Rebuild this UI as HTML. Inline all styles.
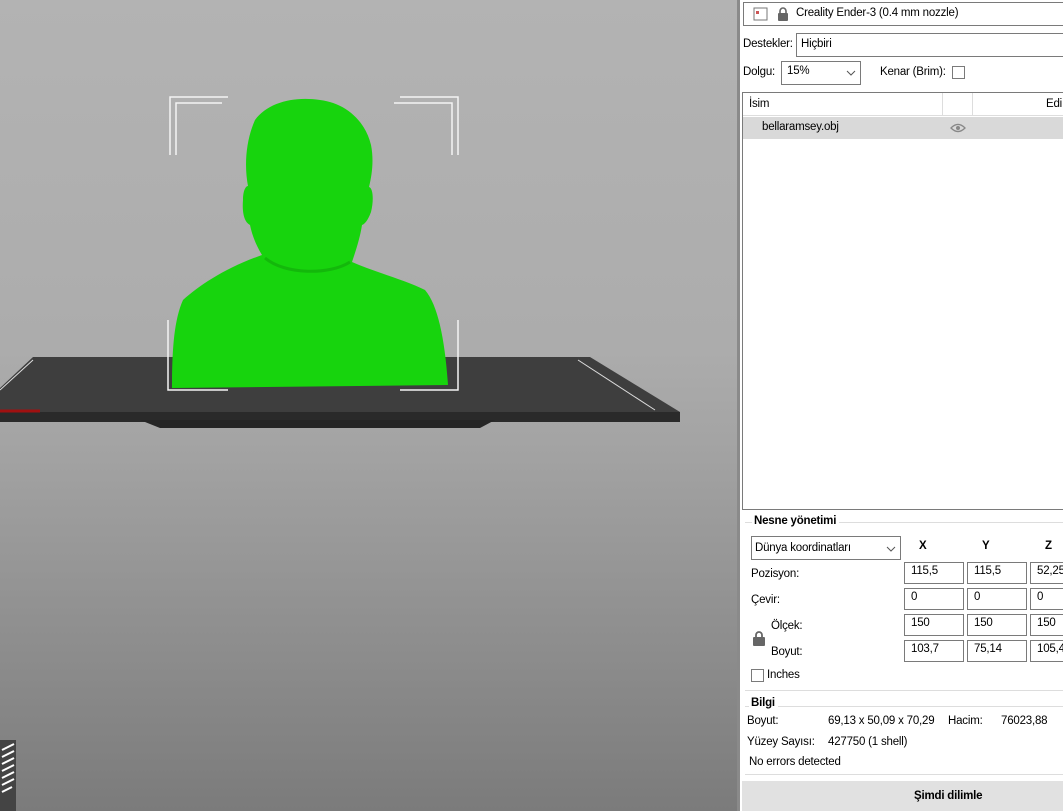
<!DOCTYPE html>
<html><head><meta charset="utf-8">
<style>
*{box-sizing:border-box;margin:0;padding:0}
body{width:1063px;height:811px;overflow:hidden;position:relative;font-family:"Liberation Sans",sans-serif;font-size:11.5px;letter-spacing:-0.2px;color:#000;background:#fff}
.vp{position:absolute;left:0;top:0;width:737px;height:811px;background:linear-gradient(#b3b3b3 0px,#acacac 350px,#a4a4a4 440px,#7b7b7b 811px)}
.sep{position:absolute;left:737px;top:0;width:3px;height:811px;background:#8a8a8a}
.a{position:absolute;white-space:nowrap}
.box{position:absolute;border:1px solid #7a7a7a;background:#fff}
.in{position:absolute;border:1px solid #7a7a7a;background:#fff;width:60px;height:22px;padding:2px 0 0 6px}
.b{font-weight:bold}
</style></head><body>
<div class="vp"></div>
<svg class="a" style="left:0;top:0" width="737" height="811">
 <polygon points="33,357 590,357 680,412 0,412 0,388" fill="#3e3e3e"/>
 <polygon points="0,412 680,412 680,422 0,422" fill="#2a2a2a"/>
 <polygon points="140,420 495,420 480,428 160,428" fill="#252525"/>
 <line x1="33" y1="360" x2="0" y2="390" stroke="#ddd" stroke-width="1"/>
 <line x1="578" y1="360" x2="655" y2="410" stroke="#ddd" stroke-width="1"/>
 <line x1="0" y1="411" x2="40" y2="411" stroke="#a01010" stroke-width="3"/>
 <path d="M262,255 C256,245 252,235 250,225 C244,222 242,212 243,200 C243,190 246,186 248,186 C244,165 246,140 255,120 C268,102 295,96 320,100 C345,103 365,120 371,145 C374,160 372,175 369,187 C373,188 374,200 371,212 C368,220 365,224 362,225 C360,238 356,250 352,262 C375,272 405,280 425,290 C438,305 445,340 448,385 L172,388 C172,350 174,320 183,300 C200,285 225,268 262,255 Z" fill="#17d40d"/>
 <path d="M265,258 C285,275 330,275 350,262" stroke="#13b80b" stroke-width="3" fill="none"/>
 <path d="M170,155 V97 H228 M176,155 V103 H222 M400,97 H458 V155 M394,103 H452 V155 M168,320 V390 H228 M458,320 V390 H400" stroke="#f4f4f4" stroke-width="1.5" fill="none"/>
 <rect x="0" y="740" width="16" height="71" fill="#444"/>
 <path d="M2,750 l12,-6 M2,757 l12,-6 M2,764 l12,-6 M2,771 l12,-6 M2,778 l12,-6 M2,785 l12,-6 M2,792 l10,-5" stroke="#fff" stroke-width="2"/>
</svg>
<div class="sep"></div>
<div class="a" style="left:740px;top:0;width:323px;height:811px;background:#fff"></div>
<div class="box" style="left:743px;top:2px;width:330px;height:24px"></div>
<svg class="a" style="left:753px;top:7px" width="40" height="16"><rect x="1" y="1" width="13" height="12" fill="#fff" stroke="#777"/><rect x="3" y="4" width="3" height="3" fill="#c55"/><rect x="25" y="6" width="10" height="8" rx="1" fill="#666"/><path d="M27,6 v-2 a3,3 0 0 1 6,0 v2" stroke="#666" stroke-width="1.6" fill="none"/></svg>
<div class="a" style="left:796px;top:7px">Creality Ender-3 (0.4 mm nozzle)</div>
<div class="a" style="left:743px;top:38px">Destekler:</div>
<div class="box" style="left:796px;top:33px;width:280px;height:24px"></div>
<div class="a" style="left:801px;top:38px">Hiçbiri</div>
<div class="a" style="left:743px;top:66px">Dolgu:</div>
<div class="box" style="left:781px;top:61px;width:80px;height:24px"></div>
<div class="a" style="left:787px;top:65px">15%</div>
<svg class="a" style="left:846px;top:69px" width="10" height="8"><path d="M1,2 L5,6 L9,2" stroke="#555" fill="none"/></svg>
<div class="a" style="left:880px;top:66px">Kenar (Brim):</div>
<div class="box" style="left:952px;top:66px;width:13px;height:13px"></div>
<div class="box" style="left:742px;top:92px;width:330px;height:418px"></div>
<div class="a" style="left:743px;top:93px;width:330px;height:23px;border-bottom:1px solid #ddd"></div>
<div class="a" style="left:942px;top:93px;width:1px;height:23px;background:#ddd"></div>
<div class="a" style="left:972px;top:93px;width:1px;height:23px;background:#ddd"></div>
<div class="a" style="left:749px;top:98px">İsim</div>
<div class="a" style="left:1046px;top:98px">Edi</div>
<div class="a" style="left:743px;top:117px;width:330px;height:22px;background:#d9d9d9"></div>
<div class="a" style="left:762px;top:121px">bellaramsey.obj</div>
<svg class="a" style="left:950px;top:122px" width="16" height="12"><path d="M1,6 Q8,-1 15,6 Q8,13 1,6 Z" fill="none" stroke="#888" stroke-width="1.3"/><circle cx="8" cy="6" r="2" fill="#888"/></svg>
<div class="a" style="left:745px;top:522px;width:330px;height:1px;background:#ddd"></div>
<div class="a b" style="left:752px;top:515px;background:#fff;padding:0 3px 0 2px">Nesne yönetimi</div>
<div class="box" style="left:751px;top:536px;width:150px;height:24px"></div>
<div class="a" style="left:755px;top:542px">Dünya koordinatları</div>
<svg class="a" style="left:886px;top:545px" width="10" height="8"><path d="M1,2 L5,6 L9,2" stroke="#555" fill="none"/></svg>
<div class="a b" style="left:919px;top:540px">X</div>
<div class="a b" style="left:982px;top:540px">Y</div>
<div class="a b" style="left:1045px;top:540px">Z</div>
<div class="a" style="left:751px;top:568px">Pozisyon:</div>
<div class="a" style="left:751px;top:594px">Çevir:</div>
<div class="a" style="left:771px;top:620px">Ölçek:</div>
<div class="a" style="left:771px;top:646px">Boyut:</div>
<svg class="a" style="left:752px;top:631px" width="14" height="16"><rect x="1" y="6" width="12" height="9" rx="1" fill="#666"/><path d="M4,6 v-2 a3,3 0 0 1 6,0 v2" stroke="#666" stroke-width="1.8" fill="none"/></svg>
<div class="in" style="left:904px;top:562px">115,5</div><div class="in" style="left:967px;top:562px">115,5</div><div class="in" style="left:1030px;top:562px">52,25</div>
<div class="in" style="left:904px;top:588px">0</div><div class="in" style="left:967px;top:588px">0</div><div class="in" style="left:1030px;top:588px">0</div>
<div class="in" style="left:904px;top:614px">150</div><div class="in" style="left:967px;top:614px">150</div><div class="in" style="left:1030px;top:614px">150</div>
<div class="in" style="left:904px;top:640px">103,7</div><div class="in" style="left:967px;top:640px">75,14</div><div class="in" style="left:1030px;top:640px">105,4</div>
<div class="box" style="left:751px;top:669px;width:13px;height:13px"></div>
<div class="a" style="left:767px;top:669px">Inches</div>
<div class="a" style="left:745px;top:690px;width:330px;height:1px;background:#ddd"></div>
<div class="a" style="left:745px;top:706px;width:330px;height:1px;background:#ddd"></div>
<div class="a b" style="left:749px;top:697px;background:#fff;padding:0 3px 0 2px">Bilgi</div>
<div class="a" style="left:747px;top:715px">Boyut:</div>
<div class="a" style="left:828px;top:715px">69,13 x 50,09 x 70,29</div>
<div class="a" style="left:948px;top:715px">Hacim:</div>
<div class="a" style="left:1001px;top:715px">76023,88</div>
<div class="a" style="left:747px;top:736px">Yüzey Sayısı:</div>
<div class="a" style="left:828px;top:736px">427750 (1 shell)</div>
<div class="a" style="left:749px;top:756px">No errors detected</div>
<div class="a" style="left:745px;top:774px;width:330px;height:1px;background:#ddd"></div>
<div class="a" style="left:742px;top:781px;width:330px;height:30px;background:#e1e1e1"></div>
<div class="a b" style="left:914px;top:790px">Şimdi dilimle</div>
</body></html>
